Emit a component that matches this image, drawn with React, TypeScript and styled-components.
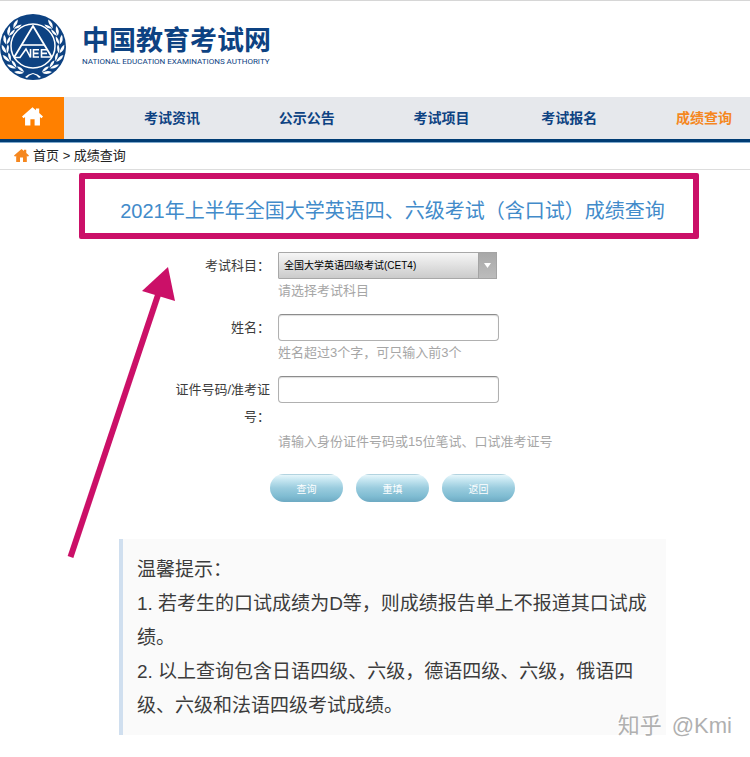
import React from "react";
import styled, { createGlobalStyle } from "styled-components";

const GlobalStyle = createGlobalStyle`
  * { box-sizing: border-box; }
  body {
    margin: 0;
    background: #fff;
    color: #3c3c3c;
    font: 13px/27px "Liberation Sans", "Noto Sans CJK SC", sans-serif;
  }
  a { color: inherit; text-decoration: none; }
`;

const Page = styled.div`
  position: relative;
  padding-bottom: 22px;
  border-top: 1px solid #d6d6d6;
`;

const Header = styled.header`
  display: flex;
  align-items: center;
  gap: 16px;
  height: 96px;
  padding-bottom: 4px;
  color: #0d4282;
`;

const Brand = styled.div`
  display: flex;
  flex-direction: column;
`;

const BrandName = styled.h1`
  margin: 0;
  font-size: 27px;
  line-height: 30px;
  font-weight: 700;
`;

const BrandSub = styled.span`
  font-family: Roboto, "Liberation Sans", sans-serif;
  font-size: 8px;
  line-height: 12px;
  white-space: nowrap;
`;

const Nav = styled.nav`
  display: flex;
  height: 45px;
  background: #e6e8ec;
  border-bottom: 3px solid #003c74;
  box-shadow: 0 1px 0 #7fa9cd;
`;

const HomeLink = styled.a`
  display: flex;
  align-items: center;
  justify-content: center;
  width: 64px;
  padding-bottom: 4px;
  background: #ff8000;
`;

const NavList = styled.ul`
  flex: 1;
  display: grid;
  grid-template-columns: 135fr 135fr 128fr 135fr auto;
  align-items: center;
  margin: 0;
  padding: 0 18px 0 80px;
  list-style: none;
`;

const NavLink = styled.a<{ $active?: boolean }>`
  color: ${(p) => (p.$active ? "#f5871f" : "#0d4282")};
  font-size: 14px;
  font-weight: 700;
  white-space: nowrap;
`;

const Crumbs = styled.div`
  display: flex;
  align-items: center;
  gap: 4px;
  height: 28px;
  padding-left: 14px;
  border-bottom: 1px solid #ddd;
  color: #222;
`;

const Main = styled.main`
  padding: 3px 84px 0 119px;
`;

const TitleFrame = styled.div`
  margin: 0 -33px 0 -40px;
  padding: 13px 0 3px 7px;
  border: 6px solid #cb1068;
  border-radius: 2px;
`;

const Title = styled.h2`
  margin: 0;
  color: #428bca;
  font-size: 20px;
  line-height: 38px;
  font-weight: 400;
  text-align: center;
`;

const Form = styled.form`
  display: grid;
  gap: 11px;
  padding: 13px 0 37px 51px;
`;

const Field = styled.div`
  display: grid;
  grid-template-columns: 100px 1fr;
  column-gap: 8px;
`;

const Label = styled.label`
  text-align: right;
`;

const Hint = styled.span`
  grid-column: 2;
  color: #a6a6a6;
  line-height: 24px;
`;

const SelectWrap = styled.div`
  display: flex;
  position: relative;
  width: 219px;
  height: 27px;
`;

const Select = styled.select`
  appearance: none;
  width: 100%;
  padding: 0 24px 0 5px;
  border: 1px solid #a8a8a8;
  border-radius: 1px;
  background: linear-gradient(#f6f6f6, #cbcbcb);
  color: #000;
  font: 10px "Liberation Sans", "Noto Sans CJK SC", sans-serif;
`;

const SelectArrow = styled.span`
  position: absolute;
  top: 0;
  right: 0;
  bottom: 0;
  display: flex;
  align-items: center;
  justify-content: center;
  width: 19px;
  background: linear-gradient(#a8a8a8, #bcbcbc);
  border: 1px solid #a4a4a4;
  pointer-events: none;
`;

const Input = styled.input`
  width: 221px;
  height: 27px;
  padding: 0 6px;
  border: 1px solid #b0b0b0;
  border-top-color: #8c8c8c;
  border-radius: 4px;
  background: #fff;
  box-shadow: inset 0 1px 1px #ddd;
  font: inherit;
`;

const Actions = styled.div`
  display: flex;
  gap: 13px;
  padding: 9px 0 0 100px;
`;

const Button = styled.button`
  width: 73px;
  height: 28px;
  padding: 0;
  border: 0;
  border-radius: 14px;
  background: linear-gradient(#8ab8cb 0, #e4f5fa 4%, #c4e5f0 22%, #9accde 50%, #7fbcd2 80%, #6da9c2 100%);
  color: #fff;
  font: 10px "Liberation Sans", "Noto Sans CJK SC", sans-serif;
`;

const Notice = styled.section`
  padding: 14px 14px 12px;
  border-left: 4px solid #d0dfef;
  background: #fafafa;
  font-size: 19px;
  line-height: 34px;
  p { margin: 0; }
`;

const Arrow = styled.svg`
  position: absolute;
  left: 60px;
  top: 260px;
  pointer-events: none;
`;

const Watermark = styled.div`
  position: absolute;
  right: 18px;
  bottom: 16px;
  display: flex;
  gap: 10px;
  color: #b0b0b0;
  font-size: 22px;
  line-height: 30px;
  text-shadow: -1px -1px 0 #fff;
`;

const House = ({ size, color }: { size: number; color: string }) => (
  <svg width={size} height={size} viewBox="0 0 22 20" fill={color} aria-hidden="true">
    <path d="M11 0.3 L14.6 3.4 V1.6 H18 V6.4 L22 10 L20.4 11.8 L18.8 10.5 V19.5 H13.2 V13 H8.8 V19.5 H3.2 V10.5 L1.6 11.8 L0 10 Z" />
  </svg>
);

const LEAF_ANGLES = [38, 57, 76, 95, 114, 133, 152];

const Emblem = () => (
  <svg width="66" height="66" viewBox="0 0 66 66" role="img" aria-label="NEEA">
    <circle cx="33" cy="33" r="33" fill="#0d4282" />
    {[1, -1].map((side) => (
      <g key={side} transform={`translate(33 33) scale(${side} 1)`} fill="#fff">
        {LEAF_ANGLES.map((a) => (
          <g key={a} transform={`rotate(${a}) translate(0 -27)`}>
            <path d="M4 0 Q1 -5 -5 -4 Q-2 0 4 0Z" />
            <path d="M4 0.8 Q-1 4.400 -5 2.200 Q-1 -0.5 4 0.8Z" />
          </g>
        ))}
        <path d="M0 26 Q5 27 8 30 L6 31 Q4 28 0 27Z" />
      </g>
    ))}
    <circle cx="33" cy="32" r="22" fill="#0d4282" stroke="#fff" strokeWidth="1.5" />
    <path d="M14 43.500 L33 12 L52 43.500" fill="none" stroke="#fff" strokeWidth="1.8" />
    <path d="M22 31 H44" stroke="#fff" strokeWidth="1.6" />
    <path d="M14 43.500 H20 L26 35 L30.500 43.500 V35" fill="none" stroke="#fff" strokeWidth="1.6" />
    <path d="M39 35.800 H33.500 V43 H39 M33.500 39.400 H38.500 M47 35.800 H41.500 V43 H52 M41.500 39.400 H47" fill="none" stroke="#fff" strokeWidth="1.6" />
  </svg>
);

const NAV_ITEMS = ["考试资讯", "公示公告", "考试项目", "考试报名", "成绩查询"];

export default function App() {
  return (
    <Page>
      <GlobalStyle />
      <Header>
        <Emblem />
        <Brand>
          <BrandName>中国教育考试网</BrandName>
          <BrandSub>NATIONAL EDUCATION EXAMINATIONS AUTHORITY</BrandSub>
        </Brand>
      </Header>
      <Nav>
        <HomeLink href="#" aria-label="首页">
          <House size={21} color="#fff" />
        </HomeLink>
        <NavList>
          {NAV_ITEMS.map((item) => (
            <li key={item}>
              <NavLink href="#" $active={item === "成绩查询"}>{item}</NavLink>
            </li>
          ))}
        </NavList>
      </Nav>
      <Crumbs>
        <House size={15} color="#f5871f" />
        <span><a href="#">首页</a> &gt; <a href="#">成绩查询</a></span>
      </Crumbs>
      <Main>
        <TitleFrame>
          <Title>2021年上半年全国大学英语四、六级考试（含口试）成绩查询</Title>
        </TitleFrame>
        <Form onSubmit={(e) => e.preventDefault()}>
          <Field>
            <Label htmlFor="subject">考试科目：</Label>
            <SelectWrap>
              <Select id="subject">
                <option>全国大学英语四级考试(CET4)</option>
              </Select>
              <SelectArrow>
                <svg width="7" height="5" viewBox="0 0 7 5" aria-hidden="true">
                  <path d="M0 0H7L3.5 5Z" fill="#fff" />
                </svg>
              </SelectArrow>
            </SelectWrap>
            <Hint>请选择考试科目</Hint>
          </Field>
          <Field>
            <Label htmlFor="name">姓名：</Label>
            <Input id="name" type="text" />
            <Hint>姓名超过3个字，可只输入前3个</Hint>
          </Field>
          <Field>
            <Label htmlFor="ticket">证件号码/准考证号：</Label>
            <Input id="ticket" type="text" />
            <Hint>请输入身份证件号码或15位笔试、口试准考证号</Hint>
          </Field>
          <Actions>
            <Button type="submit">查询</Button>
            <Button type="reset">重填</Button>
            <Button type="button">返回</Button>
          </Actions>
        </Form>
        <Notice>
          <p>温馨提示：</p>
          <p>1. 若考生的口试成绩为D等，则成绩报告单上不报道其口试成绩。</p>
          <p>2. 以上查询包含日语四级、六级，德语四级、六级，俄语四级、六级和法语四级考试成绩。</p>
        </Notice>
      </Main>
      <Arrow width="120" height="300" viewBox="60 261 120 300" aria-hidden="true">
        <path d="M70.500 557 L159 292" stroke="#cb1068" strokeWidth="6" />
        <path d="M168 267 L142 291 L175 301 Z" fill="#cb1068" />
      </Arrow>
      <Watermark>
        <span>知乎</span>
        <span>@Kmi</span>
      </Watermark>
    </Page>
  );
}
